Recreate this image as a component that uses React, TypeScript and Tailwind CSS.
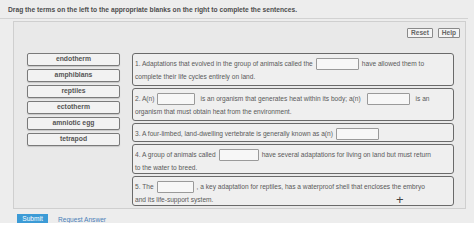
const TERMS = ["endotherm", "amphiblans", "reptiles", "ectotherm", "amniotic egg", "tetrapod"];

function Blank({ w = "w-[43px]", m = "mx-[3px]" }: { w?: string; m?: string }) {
  return (
    <span
      className={`inline-block ${w} ${m} h-[12px] align-middle border border-[#9a9a9a] bg-[#f7f7f7] rounded-[1px]`}
    />
  );
}

function Sentence({ h, children }: { h: string; children: React.ReactNode }) {
  return (
    <div
      className={`${h} border-[1.5px] border-[#6a6a6a] rounded-[3px] bg-[#efefef] px-[2px] pt-[3px] text-[6.6px] leading-[13px] text-[#5a5a5a] whitespace-nowrap`}
    >
      {children}
    </div>
  );
}

export default function App() {
  return (
    <div className="relative w-[474px] h-[223px] overflow-hidden bg-[#ededed] font-['Liberation_Sans',Arial,sans-serif]">
      <div className="pl-[8px] pt-[5px] pb-[3px] text-[6.7px] font-bold text-[#4d4d4d] border-b border-[#d2d2d2] mr-[6px]">
        Drag the terms on the left to the appropriate blanks on the right to complete the sentences.
      </div>

      <div className="ml-[13px] mr-[8px] mt-[2px] h-[188px] border border-[#cfcfcf] bg-[#e9e9e9]">
        <div className="flex justify-end gap-[5px] pr-[5px] pt-[6px]">
          <button className="h-[10px] w-[26px] border border-[#8a8a8a] rounded-[1px] bg-[#f4f4f4] text-[6.6px] font-bold leading-none text-[#666]">
            Reset
          </button>
          <button className="h-[10px] w-[22px] border border-[#8a8a8a] rounded-[1px] bg-[#f4f4f4] text-[6.6px] font-bold leading-none text-[#666]">
            Help
          </button>
        </div>

        <div className="flex mt-[15px] pl-[13px]">
          <div className="flex flex-col gap-[3px] w-[93px]">
            {TERMS.map(t => (
              <div
                key={t}
                className="h-[13px] border border-[#7a7a7a] rounded-[2px] bg-[#f2f2f2] shadow-[0_1px_1px_rgba(0,0,0,0.15)] flex items-center justify-center text-[6.8px] font-bold text-[#555]"
              >
                {t}
              </div>
            ))}
          </div>

          <div className="ml-[12px] w-[322px] flex flex-col gap-[2px]">
            <Sentence h="h-[33px]">
              1. Adaptations that evolved in the group of animals called the
              <Blank />
              have allowed them to
              <br />
              complete their life cycles entirely on land.
            </Sentence>
            <Sentence h="h-[33px]">
              2. A(n)
              <Blank w="w-[38px]" m="ml-[3px] mr-[5px]" />
              is an organism that generates heat within its body; a(n)
              <Blank m="ml-[6px] mr-[6px]" />
              is an
              <br />
              organism that must obtain heat from the environment.
            </Sentence>
            <Sentence h="h-[19px]">
              3. A four-limbed, land-dwelling vertebrate is generally known as a(n)
              <Blank />
            </Sentence>
            <Sentence h="h-[30px]">
              4. A group of animals called
              <Blank w="w-[40px]" />
              have several adaptations for living on land but must return
              <br />
              to the water to breed.
            </Sentence>
            <Sentence h="h-[30px]">
              5. The
              <Blank w="w-[37px]" />
              , a key adaptation for reptiles, has a waterproof shell that encloses the embryo
              <br />
              and its life-support system.
            </Sentence>
          </div>
        </div>
      </div>

      <div className="flex items-center pl-[17px] pt-[5px] gap-[10px]">
        <button className="h-[11px] w-[31px] bg-[#3c9bd6] text-white text-[6.6px] leading-none">Submit</button>
        <span className="text-[6.6px] text-[#4b7fb8] underline">Request Answer</span>
      </div>

      <span className="absolute left-[396px] top-[193px] text-[13px] leading-none text-[#444]">+</span>
    </div>
  );
}
